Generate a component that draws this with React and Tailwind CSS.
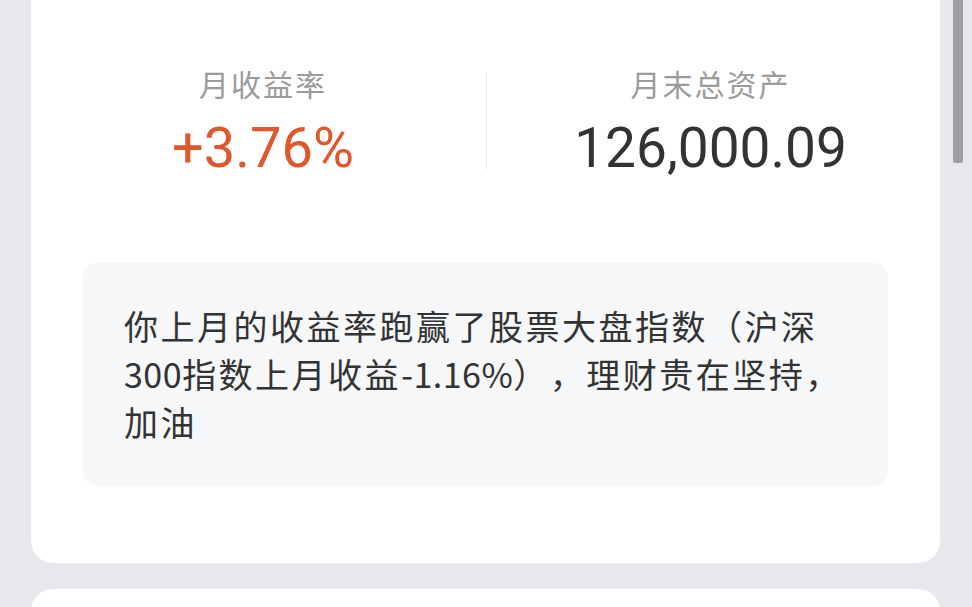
export default function App() {
  return (
    <div
      className="relative h-[607px] w-[972px] overflow-hidden bg-[#e7e8ee]"
      style={{ fontFamily: '"Roboto", "Noto Sans CJK SC", sans-serif' }}
    >
      {/* summary card */}
      <div className="ml-[31px] w-[909px] h-[563px] rounded-b-[22px] bg-white pt-[70px]">
        <div className="flex items-start">
          <div className="w-[455px] pl-[9px] flex flex-col items-center">
            <div className="text-[30px] leading-[32px] tracking-[2px] text-[#9b9b9b]">月收益率</div>
            <div className="mt-[18px] text-[56px] leading-[56px] text-[#e0572b]">+3.76%</div>
          </div>
          <div className="w-px h-[98px] mt-[2px] bg-[#ececec]" />
          <div className="flex-1 pr-[6px] flex flex-col items-center">
            <div className="text-[30px] leading-[32px] tracking-[2px] text-[#9b9b9b]">月末总资产</div>
            <div className="mt-[18px] text-[55px] leading-[56px] text-[#333]">126,000.09</div>
          </div>
        </div>

        {/* comment box */}
        <div className="mx-[52px] mt-[87px] h-[223px] rounded-[14px] bg-[#f6f7f9] pl-[41px] pr-[20px] pt-[39px]">
          <p
            className="text-[34px] leading-[48px] tracking-[2.5px] text-[#333] [text-spacing-trim:space-all]"
            style={{ fontFamily: '"Noto Sans CJK SC", sans-serif' }}
          >
            你上月的收益率跑赢了股票大盘指数（沪深<span className="tracking-[0.5px]">300</span>指数上月收益<span className="tracking-[0.5px]">-1.16%</span>），理财贵在坚持，加油
          </p>
        </div>
      </div>

      {/* next card */}
      <div className="ml-[31px] mt-[26px] w-[909px] h-[60px] rounded-t-[22px] bg-white" />

      {/* scroll thumb */}
      <div className="absolute right-[9px] top-0 w-[10px] h-[163px] rounded-b-[2px] bg-[#9ea0a4]" />
    </div>
  );
}
